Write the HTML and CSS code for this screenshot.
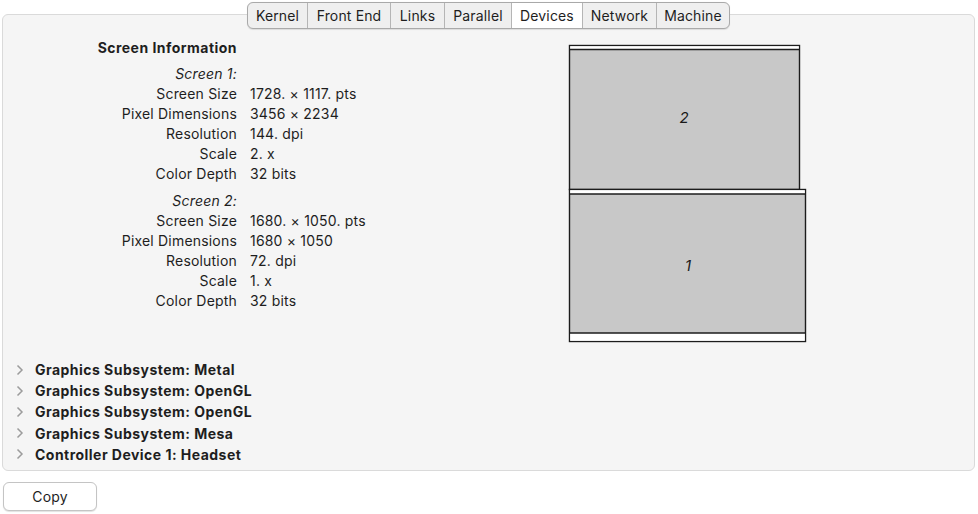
FILE: index.html
```html
<!DOCTYPE html>
<html>
<head>
<meta charset="utf-8">
<link rel="stylesheet" href="styles.css">
</head>
<body>
<div class="window">
  <div class="panel">
    <div class="top">
      <div class="info">
        <div class="heading">Screen Information</div>
        <div class="sgroup">
          <div class="lbl screen">Screen 1:</div><div></div>
          <div class="lbl">Screen Size</div><div class="val">1728. × 1117. pts</div>
          <div class="lbl">Pixel Dimensions</div><div class="val">3456 × 2234</div>
          <div class="lbl">Resolution</div><div class="val">144. dpi</div>
          <div class="lbl">Scale</div><div class="val">2. x</div>
          <div class="lbl">Color Depth</div><div class="val">32 bits</div>
        </div>
        <div class="sgroup second">
          <div class="lbl screen">Screen 2:</div><div></div>
          <div class="lbl">Screen Size</div><div class="val">1680. × 1050. pts</div>
          <div class="lbl">Pixel Dimensions</div><div class="val">1680 × 1050</div>
          <div class="lbl">Resolution</div><div class="val">72. dpi</div>
          <div class="lbl">Scale</div><div class="val">1. x</div>
          <div class="lbl">Color Depth</div><div class="val">32 bits</div>
        </div>
      </div>
      <svg class="diagram" width="240" height="300" viewBox="0 0 240 300">
        <rect x="1.5" y="1.5" width="230" height="144" fill="#c8c8c8" stroke="#1c1c1c" stroke-width="1.4"/>
        <rect x="2.2" y="2.2" width="228.6" height="3.3" fill="#ffffff"/>
        <line x1="1.5" y1="5.5" x2="231.5" y2="5.5" stroke="#1c1c1c" stroke-width="1.4"/>
        <text x="116" y="79" class="num">2</text>
        <rect x="1.5" y="145.5" width="236" height="152" fill="#c8c8c8" stroke="#1c1c1c" stroke-width="1.4"/>
        <rect x="2.2" y="146.2" width="234.6" height="3.8" fill="#ffffff"/>
        <line x1="1.5" y1="150" x2="237.5" y2="150" stroke="#1c1c1c" stroke-width="1.4"/>
        <rect x="2.2" y="289" width="234.6" height="7.8" fill="#ffffff"/>
        <line x1="1.5" y1="289" x2="237.5" y2="289" stroke="#1c1c1c" stroke-width="1.4"/>
        <text x="120" y="227" class="num">1</text>
      </svg>
    </div>
    <ul class="groups">
      <li><svg class="chev" width="8" height="12" viewBox="0 0 8 12"><polyline points="1.5,1.5 6,6 1.5,10.5" fill="none" stroke="#9c9c9c" stroke-width="1.5"/></svg><span>Graphics Subsystem: Metal</span></li>
      <li><svg class="chev" width="8" height="12" viewBox="0 0 8 12"><polyline points="1.5,1.5 6,6 1.5,10.5" fill="none" stroke="#9c9c9c" stroke-width="1.5"/></svg><span>Graphics Subsystem: OpenGL</span></li>
      <li><svg class="chev" width="8" height="12" viewBox="0 0 8 12"><polyline points="1.5,1.5 6,6 1.5,10.5" fill="none" stroke="#9c9c9c" stroke-width="1.5"/></svg><span>Graphics Subsystem: OpenGL</span></li>
      <li><svg class="chev" width="8" height="12" viewBox="0 0 8 12"><polyline points="1.5,1.5 6,6 1.5,10.5" fill="none" stroke="#9c9c9c" stroke-width="1.5"/></svg><span>Graphics Subsystem: Mesa</span></li>
      <li><svg class="chev" width="8" height="12" viewBox="0 0 8 12"><polyline points="1.5,1.5 6,6 1.5,10.5" fill="none" stroke="#9c9c9c" stroke-width="1.5"/></svg><span>Controller Device 1: Headset</span></li>
    </ul>
  </div>
  <div class="tabs">
    <div class="tab t1">Kernel</div>
    <div class="tab t2">Front End</div>
    <div class="tab t3">Links</div>
    <div class="tab t4">Parallel</div>
    <div class="tab t5 active">Devices</div>
    <div class="tab t6">Network</div>
    <div class="tab t7">Machine</div>
  </div>
  <div class="actions">
    <button class="copy">Copy</button>
  </div>
</div>
</body>
</html>
```

FILE: styles.css
```css
* { box-sizing: border-box; }
html, body {
  margin: 0;
  padding: 0;
  background: #ffffff;
}
body {
  font-family: Inter, "Liberation Sans", sans-serif;
  font-size: 14px;
  color: #1e1e1e;
  width: 978px;
  height: 514px;
  overflow: hidden;
}
.window {
  position: relative;
  padding-top: 14px;
}
.panel {
  margin: 0 3px 0 2px;
  height: 457px;
  border: 1px solid #dadada;
  border-radius: 6px;
  background: #f5f5f5;
}
.top {
  display: flex;
  align-items: flex-start;
  height: 343px;
}
.info {
  width: 547px;
  padding-top: 23px;
  line-height: 20px;
}
.heading {
  width: 234px;
  text-align: right;
  font-weight: 700;
  letter-spacing: 0.47px;
  white-space: nowrap;
}
.sgroup {
  display: grid;
  grid-template-columns: 234px 300px;
  column-gap: 13px;
  grid-auto-rows: 20px;
  margin-top: 6px;
  letter-spacing: 0.19px;
}
.sgroup.second { margin-top: 7px; }
.lbl { text-align: right; white-space: nowrap; }
.val { white-space: nowrap; }
.screen { font-style: italic; }
.diagram {
  display: block;
  margin-top: 29px;
  margin-left: 18px;
}
.num {
  font-family: Inter, "Liberation Sans", sans-serif;
  font-style: italic;
  font-size: 15px;
  fill: #1a1a1a;
  text-anchor: middle;
}
.groups {
  list-style: none;
  margin: 0;
  padding: 1px 0 0 13px;
}
.groups li {
  display: flex;
  align-items: center;
  height: 21.2px;
  font-weight: 700;
  letter-spacing: 0.47px;
}
.chev { display: block; margin-right: 11px; }
.tabs {
  position: absolute;
  top: 2px;
  left: 247px;
  display: flex;
  height: 27px;
  border: 1px solid #a9a9a9;
  border-radius: 6px;
  background: #efefef;
  overflow: hidden;
  box-shadow: 0 0.5px 1px rgba(0,0,0,0.1);
  letter-spacing: 0.15px;
}
.tab {
  display: flex;
  align-items: center;
  justify-content: center;
  border-left: 1px solid #b5b5b5;
  color: #1e1e1e;
  font-size: 14px;
}
.tab:first-child { border-left: none; }
.t1 { width: 59px; }
.t2 { width: 83px; }
.t3 { width: 54px; }
.t4 { width: 67px; }
.t5 { width: 71px; }
.t6 { width: 74px; }
.t7 { width: 73px; }
.tab.active { background: #ffffff; }
.actions {
  padding: 11px 0 0 3px;
}
.copy {
  display: block;
  width: 94px;
  height: 29px;
  border: 1px solid #c4c4c4;
  border-radius: 6px;
  background: #ffffff;
  box-shadow: 0 1px 1px rgba(0,0,0,0.12);
  font-family: Inter, "Liberation Sans", sans-serif;
  font-size: 14px;
  letter-spacing: 0.15px;
  color: #1e1e1e;
  padding: 0;
}
```
